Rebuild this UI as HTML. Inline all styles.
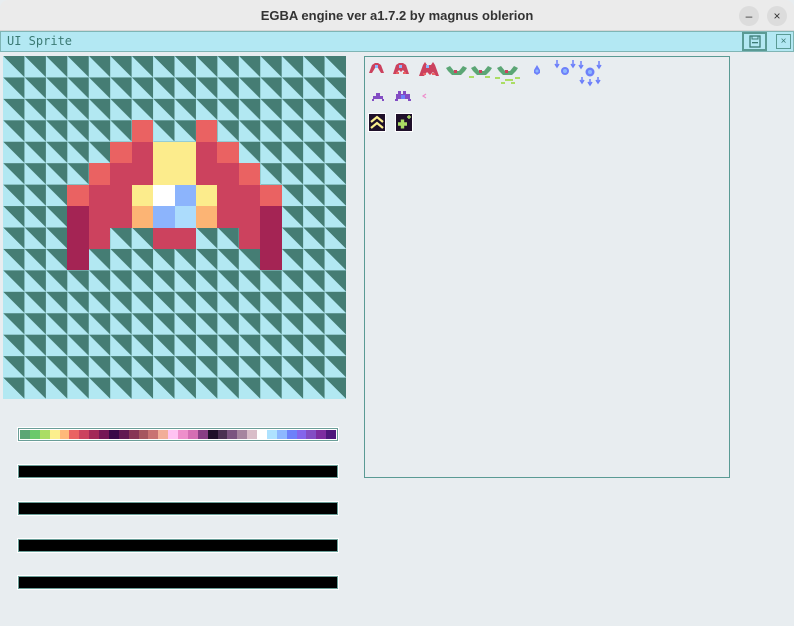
<!DOCTYPE html>
<html><head><meta charset="utf-8"><style>
*{margin:0;padding:0;box-sizing:border-box}
body{width:794px;height:626px;overflow:hidden;background:#e8edf0;font-family:"Liberation Sans",sans-serif;position:relative}
.title{position:absolute;left:0;top:0;width:794px;height:31px;background:#ebebeb;border-bottom:1px solid #d6d6d6;border-radius:8px 8px 0 0;text-align:center;line-height:31px;font-size:13px;font-weight:bold;color:#333}
.wb{position:absolute;top:6px;width:20px;height:20px;border-radius:50%;background:#dcdcdc;font-size:12px;line-height:20px;text-align:center;color:#333;font-weight:normal}
.hdr{position:absolute;left:0;top:31px;width:794px;height:21px;background:#b3e8f3;border:1px solid #7fb5b5;}
.hdr span{position:absolute;left:6px;top:2px;font-family:"DejaVu Sans Mono",monospace;font-size:12px;color:#3b7a74}
.sv{position:absolute;left:741px;top:0px;width:25px;height:19px;border:2px solid #5a9a94;}
.cx{position:absolute;left:775px;top:2px;width:15px;height:15px;border:1px solid #5a9a94;font-size:10px;line-height:13px;text-align:center;color:#3b7a74}
.grid{position:absolute;left:3px;top:56px;width:343px;height:343px;background-image:linear-gradient(to bottom left,#457d74 50%,#b2e8f2 50%);background-size:21.4375px 21.4375px}
.px{position:absolute;width:21.5px;height:21.5px}
.rp{position:absolute;left:364px;top:56px;width:366px;height:422px;border:1px solid #5a9a94;background:#e8edf0}
.bar{position:absolute;left:18px;width:320px;height:13px;border:1px solid #6a9e98;background:#000;outline:1px solid #fff;outline-offset:0}
.pal{display:flex;background:#fff;padding:1px}
.pal i{flex:1;height:100%}
</style></head><body>
<div class="title">EGBA engine ver a1.7.2 by magnus oblerion<div class="wb" style="left:739px">–</div><div class="wb" style="left:767px">×</div></div>
<div class="hdr"><span>UI Sprite</span><div class="sv"><svg width="21" height="15" viewBox="0 0 21 15"><rect x="6" y="2" width="10" height="11" fill="none" stroke="#3b7a74" stroke-width="1.3"/><rect x="8" y="2" width="6" height="3" fill="none" stroke="#3b7a74"/><rect x="8" y="8" width="6" height="1.3" fill="#3b7a74"/></svg></div><div class="cx">×</div></div>
<div class="grid" id="g"></div>
<div class="rp">
<svg width="366" height="100" style="position:absolute;left:0;top:0">
<g fill="#cc425e"><path d="M4 16l3-8 3-2h3l3 2 3 8h-3l-3-5h-3l-3 5z"/><path d="M28 17l3-9 3-2h4l3 2 3 9h-3l-3-4-2 2-2-2-3 4z"/><path d="M54 19l4-11 2-3 2 3h4l2-3 2 3 4 11h-3l-3-4-3 3-3-3-3 4z"/></g>
<g fill="#ea6262"><rect x="31" y="15" width="3" height="2"/><rect x="38" y="15" width="3" height="2"/><rect x="58" y="16" width="3" height="2"/><rect x="67" y="16" width="3" height="2"/></g>
<g fill="#8db7ff"><rect x="10" y="8" width="3" height="3"/><rect x="34" y="8" width="3" height="3"/><rect x="61" y="8" width="3" height="3"/></g>
<g fill="#5ba675"><path d="M81 11l4-2 4 5h5l4-5 4 2-2 3-4 4h-9l-4-4z"/><path d="M106 11l4-2 4 5h5l4-5 4 2-2 3-4 4h-9l-4-4z"/><path d="M132 11l4-2 4 5h5l4-5 4 2-2 3-4 4h-9l-4-4z"/></g>
<g fill="#abdd64"><rect x="104" y="19" width="5" height="2"/><rect x="120" y="19" width="5" height="2"/><rect x="130" y="20" width="5" height="2"/><rect x="150" y="20" width="5" height="2"/><rect x="136" y="25" width="4" height="2"/><rect x="146" y="25" width="4" height="2"/><rect x="140" y="22" width="8" height="2"/></g>
<g fill="#cc425e"><rect x="89" y="13" width="3" height="3"/><rect x="114" y="13" width="3" height="3"/><rect x="140" y="13" width="3" height="3"/></g>
<g fill="#6d80fa"><path d="M172 8l3 5v3l-3 2-3-2v-3z"/><circle cx="200" cy="14" r="4"/><circle cx="225" cy="15" r="4.5"/><path d="M192 3v7M190 7l2 3 2-3M208 3v7M206 7l2 3 2-3M216 4v7M214 8l2 3 2-3M234 4v7M232 8l2 3 2-3M217 20v6M215 23l2 3 2-3M233 20v6M231 23l2 3 2-3M225 22v6M223 25l2 3 2-3" stroke="#6d80fa" stroke-width="1.5" fill="none"/></g>
<g fill="#8db7ff"><circle cx="172" cy="14" r="1.5"/><circle cx="200" cy="14" r="2"/><circle cx="225" cy="15" r="2"/></g>
<g fill="#834dc4"><rect x="11" y="36" width="4" height="3"/><rect x="8" y="39" width="10" height="3"/><rect x="7" y="42" width="2" height="2"/><rect x="17" y="42" width="2" height="2"/><rect x="33" y="34" width="3" height="3"/><rect x="38" y="34" width="3" height="3"/><rect x="31" y="37" width="14" height="5"/><rect x="30" y="42" width="3" height="2"/><rect x="43" y="42" width="3" height="2"/><rect x="36" y="38" width="4" height="4" fill="#6d80fa"/></g>
<path d="M61 37l-3 2 3 2" stroke="#ee8fcb" stroke-width="1.2" fill="none"/>
<rect x="3.5" y="56.5" width="17" height="18" fill="#1f102a" stroke="#fff"/><path d="M6 65l6-5 6 5M6 71l6-5 6 5" stroke="#fcef8d" stroke-width="2.2" fill="none"/>
<rect x="30.5" y="56.5" width="17" height="18" fill="#1f102a" stroke="#fff"/><path d="M33 67h9M37.5 62.5v9" stroke="#abdd64" stroke-width="3.4"/><path d="M42 60h4M44 58v4" stroke="#abdd64" stroke-width="1.4"/>
</svg>
</div>
<div class="bar pal" style="top:428px"><i style="background:#5ba675"></i><i style="background:#6bc96c"></i><i style="background:#abdd64"></i><i style="background:#fcef8d"></i><i style="background:#ffb879"></i><i style="background:#ea6262"></i><i style="background:#cc425e"></i><i style="background:#a32858"></i><i style="background:#751756"></i><i style="background:#390947"></i><i style="background:#611851"></i><i style="background:#873555"></i><i style="background:#a6555f"></i><i style="background:#c97373"></i><i style="background:#f2ae99"></i><i style="background:#ffc3f2"></i><i style="background:#ee8fcb"></i><i style="background:#d46eb3"></i><i style="background:#873e84"></i><i style="background:#1f102a"></i><i style="background:#4a3052"></i><i style="background:#7b5480"></i><i style="background:#a6859f"></i><i style="background:#d9bdc8"></i><i style="background:#ffffff"></i><i style="background:#aee2ff"></i><i style="background:#8db7ff"></i><i style="background:#6d80fa"></i><i style="background:#8465ec"></i><i style="background:#834dc4"></i><i style="background:#7d2da0"></i><i style="background:#4e187c"></i></div>
<div class="bar" style="top:465px"></div>
<div class="bar" style="top:502px"></div>
<div class="bar" style="top:539px"></div>
<div class="bar" style="top:576px"></div>
<script>
var L='#ea6262',R='#cc425e',Y='#fcec8c',W='#ffffff',B='#8cb4fc',O='#fcb474',C='#acdcfc',D='#a42454';
var m={3:{6:L,9:L},4:{5:L,6:R,7:Y,8:Y,9:R,10:L},5:{4:L,5:R,6:R,7:Y,8:Y,9:R,10:R,11:L},
6:{3:L,4:R,5:R,6:Y,7:W,8:B,9:Y,10:R,11:R,12:L},7:{3:D,4:R,5:R,6:O,7:B,8:C,9:O,10:R,11:R,12:D},
8:{3:D,4:R,7:R,8:R,11:R,12:D},9:{3:D,12:D}};
var g=document.getElementById('g'),h='';
for(var r in m)for(var c in m[r])h+='<div class="px" style="left:'+(c*21.4375)+'px;top:'+(r*21.4375)+'px;background:'+m[r][c]+'"></div>';
g.innerHTML=h;
</script>
</body></html>
